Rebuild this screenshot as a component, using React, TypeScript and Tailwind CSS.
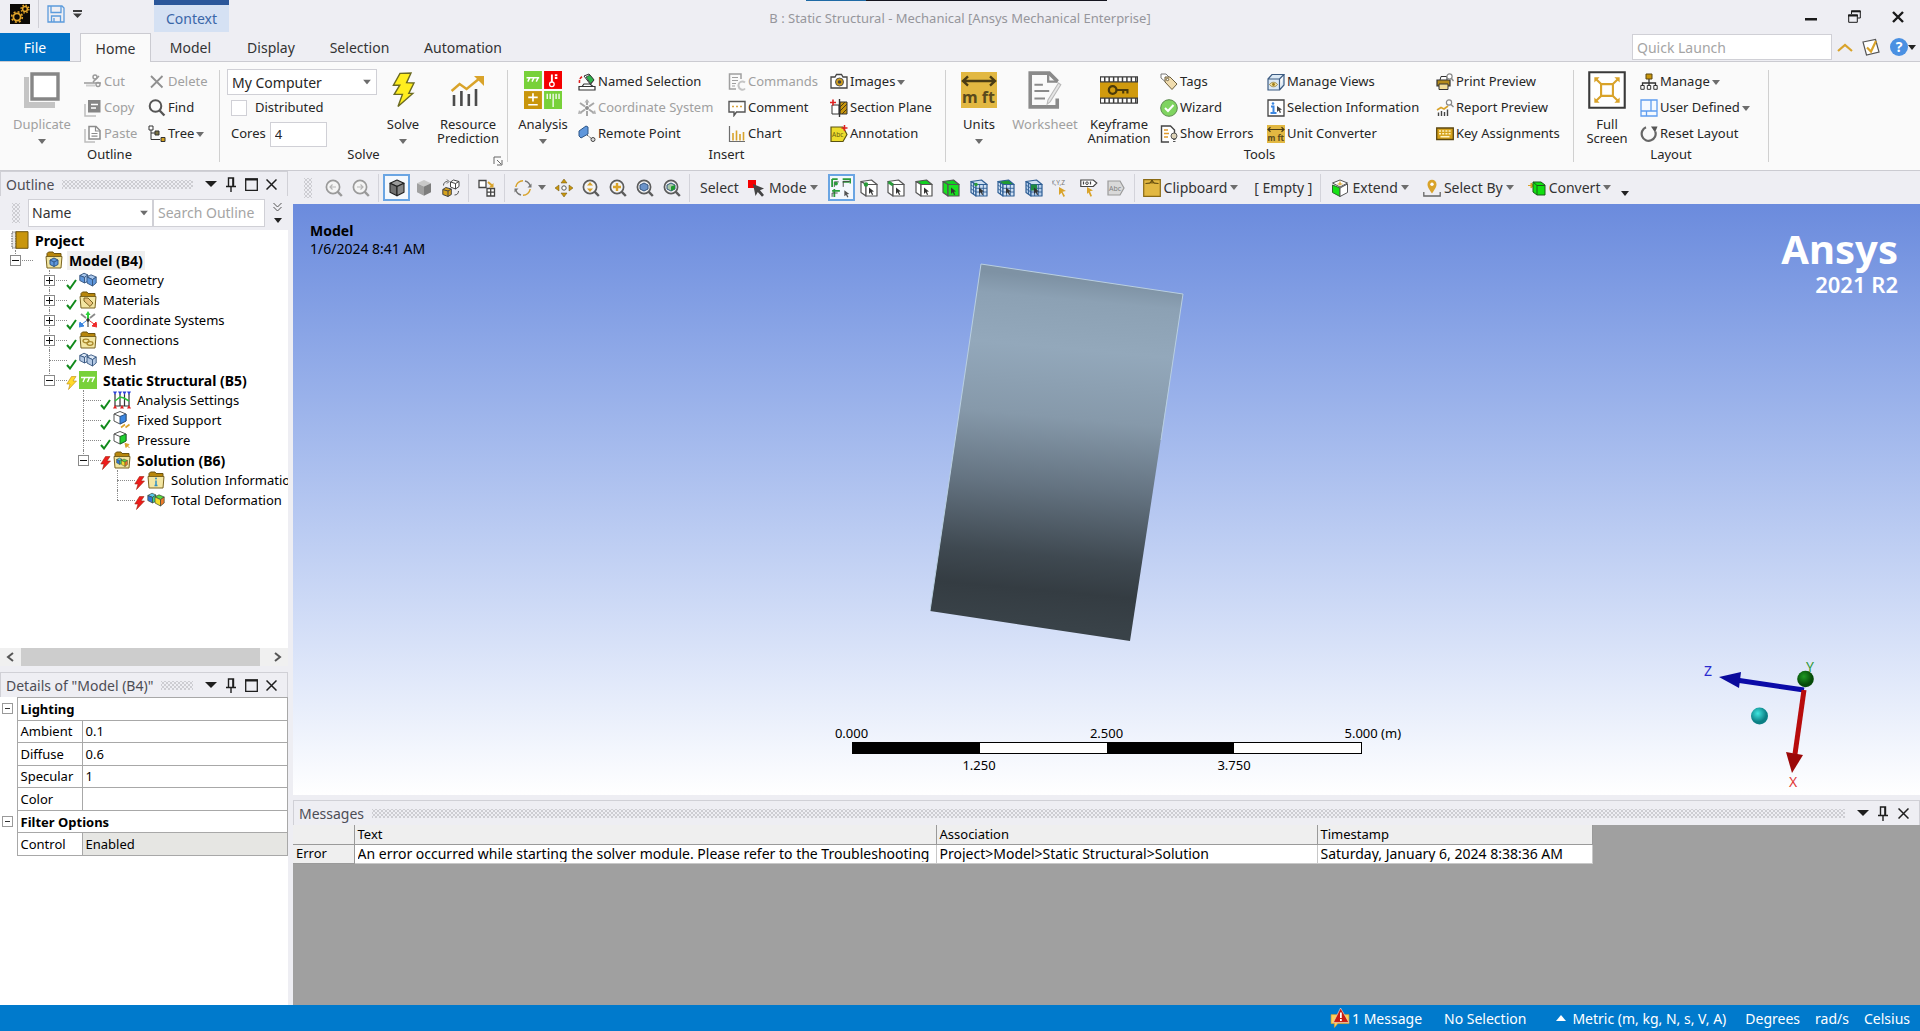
import type { ReactNode } from 'react';

type IconProps = { size?: number; children?: ReactNode };

const Icon = ({ size = 18, children }: IconProps) => (
    <svg width={size} height={size} viewBox="0 0 18 18" fill="none" className="shrink-0" aria-hidden="true">
        {children}
    </svg>
);

const Caret = ({ className = 'text-[#6d6d6d]' }: { className?: string }) => (
    <svg width="8" height="5" viewBox="0 0 8 5" className={`shrink-0 ${className}`} aria-hidden="true">
        <path d="M0 0h8L4 5z" fill="currentColor" />
    </svg>
);

/* ---------- shared icon parts ---------- */

const Magnifier = ({ stroke, children }: { stroke: string; children?: ReactNode }) => (
    <Icon>
        <circle cx="8" cy="8" r="6.6" fill="#f4f4f4" stroke={stroke} strokeWidth="1.7" />
        <path d="M12.6 12.6l4.2 4.4" stroke={stroke} strokeWidth="2.4" />
        {children}
    </Icon>
);

const IsoCube = (props: { top: string; left: string; right: string; stroke?: string }) => (
    <g stroke={props.stroke ?? '#444'} strokeWidth="1.1" strokeLinejoin="round">
        <path d="M9 1l7 3.2-7 3.4-7-3.4z" fill={props.top} />
        <path d="M2 4.2l7 3.4v9.2l-7-3.6z" fill={props.left} />
        <path d="M16 4.2L9 7.6v9.2l7-3.6z" fill={props.right} />
    </g>
);

const Cursor = () => <path d="M9 8.5l5 4-2.2.3 1.4 2.8-1.2.5-1.3-2.8L9 15z" fill="#333" />;

const PickCube = (props: { top?: string; body?: string; mesh?: boolean; children?: ReactNode }) => (
    <Icon>
        <g stroke={props.mesh ? '#2f5f95' : '#555'} strokeWidth="1.2" strokeLinejoin="round">
            <path d="M1 2.5L11.5 1 17 5.5H6z" fill={props.top ?? '#fff'} />
            <path d="M1 2.5l5 3V17l-5-3.6z" fill={props.body ?? '#fff'} />
            <path d="M6 5.5h11V17H6z" fill={props.body ?? '#fff'} />
            {props.mesh && <path d="M6 9.3h11M6 13h11M9.6 5.5V17M13.3 5.5V17M1 6l5 3.3M1 9.8L6 13M3.5 4v11.2" strokeWidth="0.9" />}
        </g>
        {props.children}
        <Cursor />
    </Icon>
);

const Folder = ({ children }: { children?: ReactNode }) => (
    <Icon>
        <path d="M2 6V2.5L3.5 1H8l1 1.5h7V6z" fill="#b8860b" stroke="#6d5410" />
        <path d="M1 5.5h16L16 17H2z" fill="#f3e6a2" stroke="#7a6420" />
        {children}
    </Icon>
);

const Bricks = ({ fill, light }: { fill: string; light: string }) => (
    <Icon>
        <g stroke="#34557f" strokeWidth="0.9" strokeLinejoin="round">
            <path d="M.8 4.5L5 2.200l4 1.800-3.500 2.400z" fill={light} />
            <path d="M.8 4.5l4.700 1.900v5.600L.8 9.500z" fill={fill} />
            <path d="M5.500 6.400L9 4v6l-3.500 2z" fill={light} />
            <path d="M8 6l4-2.200L17.200 6l-3.700 2.600z" fill={light} />
            <path d="M8 6l5.500 2.600v6.400L8 12z" fill={fill} />
            <path d="M13.500 8.600L17.200 6v6l-3.700 3z" fill={fill} />
        </g>
    </Icon>
);

const Units = ({ size }: { size?: number }) => (
    <Icon size={size}>
        <path d="M0 0h18v18H0z" fill="#e2b842" />
        <path d="M1 4.500h16M3.500 2.200L1 4.500l2.500 2.300M14.500 2.200L17 4.500l-2.500 2.300" stroke="#4a3c14" strokeWidth="1.200" />
        <text x="0.5" y="15.500" fontSize="8" fontWeight="700" fontFamily="Noto Sans, sans-serif" fill="#5a4a1c">
            m ft
        </text>
    </Icon>
);

/* ---------- ribbon icons ---------- */

const CutIcon = () => (
    <Icon>
        <path d="M0 10h17M9 9l6-6" stroke="#9a9a9a" strokeWidth="1.6" />
        <circle cx="11" cy="4" r="2" stroke="#9a9a9a" strokeWidth="1.4" />
        <circle cx="14" cy="11.500" r="2" stroke="#9a9a9a" strokeWidth="1.4" />
        <path d="M2 12.500h9" stroke="#cfcfcf" strokeWidth="2" />
    </Icon>
);
const CopyIcon = () => (
    <Icon>
        <path d="M1 5v12h11" stroke="#bdbdbd" strokeWidth="1.5" />
        <path d="M4 1h12.500v12.500H4z" fill="#858585" />
        <path d="M7 5.500h7M7 9h5" stroke="#fff" strokeWidth="1.6" />
    </Icon>
);
const PasteIcon = () => (
    <Icon>
        <path d="M1 4v13h10" stroke="#bdbdbd" strokeWidth="1.5" />
        <path d="M5 1.500h7l4 4v8.500H5z" fill="#fff" stroke="#8c8c8c" strokeWidth="1.5" />
        <path d="M7.500 8.500h6M7.500 11.200h6M11.500 1.500V6H16" stroke="#8c8c8c" strokeWidth="1.2" />
    </Icon>
);
const DeleteIcon = () => (
    <Icon>
        <path d="M3 3l11.500 11.500M14.500 3L3 14.500" stroke="#909090" strokeWidth="1.8" />
    </Icon>
);
const FindIcon = () => (
    <Icon>
        <circle cx="7.500" cy="7" r="5.800" stroke="#555" strokeWidth="2" />
        <path d="M11.600 11.500l4.800 5" stroke="#555" strokeWidth="2.4" />
    </Icon>
);
const TreeIcon = () => (
    <Icon>
        <path d="M3 5v9.500h9M3 8h6M8 8v-2" stroke="#333" />
        <path d="M1 1h4v4H1z" fill="#fff" stroke="#333" />
        <path d="M7 6h4v4H7z" fill="#7d7444" stroke="#333" />
        <path d="M13 12.500h4v4h-4z" fill="#d6a21c" stroke="#333" />
    </Icon>
);
const DuplicateIcon = () => (
    <Icon size={36}>
        <path d="M0 2.500h2.500v12.500H15.500V18H0z" fill="#c4c4c4" />
        <path d="M4 1h13v12.500H4z" fill="#fff" stroke="#868686" strokeWidth="1.7" />
    </Icon>
);
const BoltIcon = () => (
    <Icon size={36}>
        <path d="M7.500.7L13 .5l-2.200 4.800 3.700.2-2.600 5.200h2L6.500 17.300l2.200-6.100H4.600l2.800-4.600H4.200z" fill="#ffee1f" stroke="#6b6a20" strokeWidth="0.7" />
    </Icon>
);
const PredictionIcon = () => (
    <Icon size={36}>
        <path d="M2 17V11.500M5.700 17V9.500M9.400 17v-6M13 17V8.500" stroke="#4b4b4b" strokeWidth="1.3" />
        <path d="M.8 9.500l4-3.500 3.500 2.500L15 3" stroke="#d9a32a" strokeWidth="1.2" />
        <path d="M12 2h5v5z" fill="#d9a32a" />
    </Icon>
);
const AnalysisIcon = () => (
    <Icon size={38}>
        <path d="M0 0h8.500v8.500H0zM9.500 9.500H18V18H9.500z" fill="#78d13a" />
        <path d="M9.500 0H18v8.500H9.500z" fill="#f40000" />
        <path d="M0 9.500h8.500V18H0z" fill="#c9960c" />
        <path d="M1.200 3.200h6M2.700 3.300l-.9 1.700M4.700 3.300l-.9 1.700M6.700 3.300l-.9 1.700" stroke="#fff" strokeWidth="0.7" />
        <path d="M13.200 1.600v4M14.600 2h1.200M14.600 3.300h1.200" stroke="#fff" strokeWidth="0.9" />
        <circle cx="13.200" cy="6.300" r="1.100" stroke="#fff" strokeWidth="0.6" />
        <path d="M2 12.500h4.500M4.250 10.500v4M2 16h4.500" stroke="#fff" strokeWidth="0.8" />
        <path d="M11 10.800v2.500M12.400 10.800v2.500M15.200 10.800v2.500M16.600 10.800v2.500M13.800 10.800V17" stroke="#fff" strokeWidth="0.6" />
    </Icon>
);
const NamedSelectionIcon = () => (
    <Icon>
        <path d="M1.500 10C1 6 3 4 5 3.500" stroke="#e02020" strokeWidth="1.6" strokeDasharray="3 1" />
        <path d="M6 3l5-2 5 6-3.500 4.500z" fill="#fff" stroke="#333" />
        <path d="M8 4l4-2 4 5-3.500 3.500z" fill="#2fb44b" stroke="#333" strokeWidth="0.8" />
        <path d="M1 13.500h16V17H1zM4 13.500l2-2.500h6l3 2.500" fill="#fff" stroke="#333" strokeWidth="1.2" />
    </Icon>
);
const CoordinateIcon = () => (
    <Icon>
        <path d="M9 1v5M9 12v5M2 4l5 3.500M16 4l-5 3.500M2 14l5-3.500M16 14l-5-3.500" stroke="#a6a6a6" strokeWidth="2" />
        <path d="M6.500 3.500L9 0l2.500 3.500zM0 15l1-4 3 3.500zM18 15l-1-4-3 3.500z" fill="#b3b3b3" />
        <circle cx="9" cy="9" r="2" fill="#8d8d8d" />
    </Icon>
);
const RemotePointIcon = () => (
    <Icon>
        <path d="M1 6l7-5 2 1v7L3 13l-2-2z" fill="#5f97dc" stroke="#2d5688" />
        <path d="M9 10l5 4" stroke="#555" strokeDasharray="2 1" />
        <circle cx="15" cy="14.500" r="2" fill="#ddd" stroke="#444" />
    </Icon>
);
const CommandsIcon = () => (
    <Icon>
        <path d="M13 6V1H1.500v15H8" stroke="#a0a0a0" strokeWidth="1.5" />
        <path d="M4 4.500h6M4 7.500h6M4 10.500h4M4 13h3" stroke="#a0a0a0" strokeWidth="1.2" />
        <path d="M17 9.500c-3-2.500-7 0-6.500 3.500S15 18 17 15.500" stroke="#c4c4c4" strokeWidth="2" />
    </Icon>
);
const CommentIcon = () => (
    <Icon>
        <path d="M1 2.500h16v10.500H8.500L6 16.500V13H1z" fill="#fff" stroke="#555" strokeWidth="1.4" />
        <path d="M4 7.500h10" stroke="#d9a441" strokeWidth="1.4" strokeDasharray="2 2" />
    </Icon>
);
const ChartIcon = () => (
    <Icon>
        <path d="M1.500 1v15.500H17" stroke="#6d6d6d" strokeWidth="1.2" />
        <path d="M5 15.500V8M8.500 15.500v-10M12 15.500V9M15.500 15.500V7" stroke="#d9a32a" strokeWidth="1.6" />
    </Icon>
);
const ImagesIcon = () => (
    <Icon>
        <path d="M1 4h4l1.500-2.500h5L13 4h4v11H1z" fill="#fff" stroke="#444" strokeWidth="1.3" />
        <circle cx="9.500" cy="9" r="4" fill="#d4a11c" stroke="#555" />
        <circle cx="9.500" cy="9" r="1.800" fill="#444" />
    </Icon>
);
const SectionPlaneIcon = () => (
    <Icon>
        <path d="M2 6h7v9H2z" fill="#fff" stroke="#333" />
        <path d="M10 3h7v12h-7z" fill="#c9960c" stroke="#333" />
        <path d="M10 8l5-5M10 12l7-7M12 15l5-5" stroke="#4a3c14" />
        <path d="M9.500 0v18" stroke="#333" strokeWidth="1.4" />
        <path d="M0 3.500h6M3 .5v6" stroke="#e02020" strokeWidth="1.6" />
    </Icon>
);
const AnnotationIcon = () => (
    <Icon>
        <path d="M1 2h12l4 7.500-4 7H1z" fill="#eddc2c" stroke="#5b5310" strokeWidth="1.2" />
        <text x="2" y="12" fontSize="6.500" fontFamily="Noto Sans, sans-serif" fill="#6b6210">
            Abc
        </text>
        <path d="M11.500 3h6M14.500 0v6" stroke="#e02020" strokeWidth="1.5" />
    </Icon>
);
const WorksheetIcon = () => (
    <Icon size={38}>
        <path d="M14.800 13v4H2V1h9l4 4" stroke="#8a8a8a" strokeWidth="1.7" />
        <path d="M10.500 1v4H15" stroke="#8a8a8a" strokeWidth="1.1" />
        <path d="M4 6.500h4M4 9.500h7M4 13h5" stroke="#8a8a8a" strokeWidth="1" />
        <path d="M16.500 6.500l-5 8-1.500 1.200.4-2 5-8z" fill="#e6e6e6" stroke="#b9b9b9" strokeWidth="0.5" />
    </Icon>
);
const KeyframeIcon = () => (
    <Icon size={38}>
        <path d="M0 2.500h18v13H0z" fill="#3b3b3b" />
        <path d="M.5 4h17M.5 14h17" stroke="#fff" strokeWidth="1.8" strokeDasharray="1.400 .7" />
        <path d="M0 5.400h18v7.200H0z" fill="#d09a0e" />
        <circle cx="6" cy="9" r="1.800" stroke="#4a3a0a" strokeWidth="1.1" />
        <path d="M7.800 9H13.500M11 9v1.600M13 9v1.600" stroke="#4a3a0a" strokeWidth="1" />
    </Icon>
);
const TagsIcon = () => (
    <Icon>
        <path d="M1 1l5 0 6 6-4 4-7-6z" fill="#fff" stroke="#777" />
        <path d="M5 4l5 0 7 7-5 5.500-7-7.500z" fill="#f0dcae" stroke="#6b5d3c" />
        <circle cx="7.500" cy="6.500" r="1.200" fill="#fff" stroke="#6b5d3c" />
    </Icon>
);
const WizardIcon = () => (
    <Icon>
        <circle cx="9" cy="9" r="8.300" fill="#7fd460" stroke="#5a8a4a" />
        <path d="M5 9l3 3 5.500-6" stroke="#fff" strokeWidth="2" />
    </Icon>
);
const ShowErrorsIcon = () => (
    <Icon>
        <path d="M9 17H1.500V1h9l4 4v3" fill="#fff" stroke="#444" strokeWidth="1.4" />
        <path d="M4 5h4M4 8.500h5M4 12h4" stroke="#e09a2c" strokeWidth="1.4" />
        <circle cx="14" cy="11" r="3" fill="#ddd3b8" stroke="#555" />
        <path d="M13 14.500h2.500M13 16.500h2.500" stroke="#555" />
    </Icon>
);
const ManageViewsIcon = () => (
    <Icon>
        <path d="M1 6h11.500v11H1zM1 6l4-4.500h12L12.500 6M17 1.500V12l-4.500 5" fill="#dbe9f5" stroke="#3d5c82" strokeWidth="1.2" />
        <path d="M2.500 11.500c2-3 6-3 8 0-2 3-6 3-8 0z" fill="#f2e2a0" stroke="#8d7730" strokeWidth="0.8" />
        <circle cx="6.500" cy="11.500" r="1.400" fill="#9d7b14" />
    </Icon>
);
const SelectionInfoIcon = () => (
    <Icon>
        <path d="M1 1h16v16H1z" fill="#fff" stroke="#444" strokeWidth="1.3" />
        <path d="M4 7.500h2.500V14M3.500 14h6" stroke="#3b86e0" strokeWidth="2" />
        <circle cx="6" cy="4.500" r="1.300" fill="#3b86e0" />
        <path d="M10 7l5 3.500-2 .5 1 2.500-1.200.5-1-2.500L10 13z" fill="#444" />
    </Icon>
);
const PrintIcon = () => (
    <Icon>
        <path d="M4 7l1-3.500h6V7" fill="#fff" stroke="#333" />
        <path d="M1 7h13v6H1z" fill="#b38a1a" stroke="#333" strokeWidth="1.2" />
        <path d="M3 11h9v5.500H3z" fill="#f1dc96" stroke="#333" />
        <circle cx="13.500" cy="3.500" r="2.600" fill="#fff" stroke="#888" strokeWidth="1.2" />
        <path d="M15.500 5.500L17.500 8" stroke="#888" strokeWidth="1.4" />
    </Icon>
);
const ReportIcon = () => (
    <Icon>
        <path d="M1 11l4-2.500L8 10l4-3" stroke="#d9a32a" strokeWidth="1.6" />
        <path d="M2.500 17v-3.500M5.500 17v-5M8.500 17v-4M11.500 17v-6.500" stroke="#444" strokeWidth="1.4" />
        <circle cx="13" cy="3.500" r="2.600" fill="#fff" stroke="#888" strokeWidth="1.2" />
        <path d="M15 5.500L17.500 8" stroke="#888" strokeWidth="1.4" />
    </Icon>
);
const KeyboardIcon = () => (
    <Icon>
        <path d="M.7 3h16.600v11.500H.7z" fill="#d6a21c" stroke="#5b4710" strokeWidth="1.3" />
        <path d="M3 6h12M3 8.800h12" stroke="#fff3c4" strokeWidth="1.6" strokeDasharray="2 1.200" />
        <path d="M4.500 11.700h9" stroke="#fff3c4" strokeWidth="1.5" />
    </Icon>
);
const FullScreenIcon = () => (
    <Icon size={38}>
        <path d="M.6.6h16.800v16.800H.6z" fill="#fff" stroke="#3a3a3a" strokeWidth="1" />
        <path d="M6.200 6.200h5.600v5.600H6.200zM6.200 6.200L4 4M11.800 6.200L14 4M6.200 11.800L4 14M11.800 11.800L14 14" stroke="#d9a32a" strokeWidth="1" />
        <path d="M3 3h2.500L3 5.500zM15 3v2.500L12.500 3zM3 15v-2.500L5.500 15zM15 15h-2.500l2.500-2.500z" fill="#d9a32a" />
    </Icon>
);
const ManageIcon = () => (
    <Icon>
        <path d="M9 6v4M2.500 13v-3h13v3M9 10v3" stroke="#333" strokeWidth="1.3" />
        <path d="M6 1h6v5H6z" fill="#c9960c" stroke="#5b4710" />
        <path d="M.8 12.500h3.400v3.800H.8zM7.300 12.500h3.400v3.800H7.300zM13.800 12.500h3.400v3.800h-3.400z" fill="#fff" stroke="#333" />
    </Icon>
);
const UserDefinedIcon = () => (
    <Icon>
        <path d="M1 1h16v16H1zM1 12h16M11 1v11M6.500 12v5" fill="#f4f9ff" stroke="#5f9df0" strokeWidth="1.3" />
    </Icon>
);
const ResetIcon = () => (
    <Icon>
        <path d="M6 2.300A7 7 0 1 0 15.300 6.500" stroke="#666" strokeWidth="2.2" />
        <path d="M11 1.500h6.500L15 7.500z" fill="#555" />
    </Icon>
);

/* ---------- graphics toolbar icons ---------- */

const ViewSwapIcon = () => (
    <Icon>
        <g stroke="#444" strokeLinejoin="round">
            <path d="M8.500 3l3-2 5.500 1.500v5L13.500 10l-5-2z" fill="#fff" />
            <path d="M8.500 3l5 1.500L17 2.500M13.500 4.500V10" />
            <path d="M.8 10.500l3-2 5.500 1.500v5.500L6 17.500l-5.200-2z" fill="#d6a21c" />
            <path d="M.8 10.500L6 12l3.300-2M6 12v5.500" />
        </g>
        <path d="M1.500 6.500C1.500 4 3 2.500 5.500 2.500M5 .5l2 2-2 2M16.500 12c0 2.500-1.500 4-4 4" stroke="#555" />
    </Icon>
);
const GridViewIcon = () => (
    <Icon>
        <path d="M1 1.500h7v7H1zM9 9.500h7.500v7.500H9zM12.700 9.500V17M9 13.200h7.500" fill="#fff" stroke="#444" strokeWidth="1.3" />
        <path d="M10 3l4 3.500" stroke="#d9a32a" strokeWidth="2" />
        <path d="M15.500 4v4.500H11z" fill="#d9a32a" />
    </Icon>
);
const RotateIcon = () => (
    <Icon>
        <path d="M1.800 8A7.200 7.200 0 0 1 9 1.800M9 16.200a7.200 7.200 0 0 0 7.200-6.200" stroke="#d9a32a" strokeWidth="1.5" />
        <path d="M11 2a7.200 7.200 0 0 1 5.200 5M7 16a7.200 7.200 0 0 1-5.200-5" stroke="#777" strokeWidth="1.5" />
        <path d="M17.500 4.500v4h-4zM.5 13.500v-4h4z" fill="#777" />
    </Icon>
);
const PanIcon = () => (
    <Icon>
        <path d="M9 0l3 4H6zM9 18l3-4H6zM0 9l4-3v6zM18 9l-4-3v6z" fill="#c9960c" stroke="#6b5210" strokeWidth="0.5" />
        <circle cx="9" cy="9" r="2.200" fill="#fff" stroke="#555" />
    </Icon>
);
const ModeIcon = () => (
    <Icon>
        <path d="M0 1h8v8H0z" fill="#f40000" />
        <path d="M5 5l11 4.500-4 1.800 4 4.700-2 1.700-4.200-4.700L7.500 17z" fill="#444" />
    </Icon>
);
const SmartPickIcon = () => (
    <Icon size={20}>
        <path d="M1 1v7M1 1h5M10.500 3.500h6M10.500 1h7v4M1 11.500h7M3 10v7" stroke="#2a9c3a" strokeWidth="1.6" />
        <path d="M3 8V3.500h4M11 8V3h6M1 17v-3.500h5" stroke="#444" strokeWidth="0.8" />
        <circle cx="4.500" cy="5" r="1.700" fill="#2a9c3a" />
        <path d="M12 11l4.500 3.500-2 .2 1.200 2.500-1 .4-1.200-2.400L12 16.500z" fill="#555" />
    </Icon>
);
const XyzIcon = () => (
    <Icon>
        <text x="-1" y="5.500" fontSize="6.500" fontFamily="Noto Sans, sans-serif" fill="#777">
            X,Y,Z
        </text>
        <path d="M7 8l7 4-3.500.7L13 17l-1.500 1-2-4.300L7 16z" fill="#d9a32a" />
    </Icon>
);
const ProbeIcon = () => (
    <Icon>
        <path d="M.8 1h12.500l3.500 3-3.500 3.500H.8z" fill="#fff" stroke="#444" strokeWidth="1.2" />
        <path d="M3.500 2.500v3M10.500 2.500v3" stroke="#444" strokeWidth="1.2" />
        <circle cx="7" cy="4.200" r="1.300" stroke="#444" />
        <path d="M7 8l6 3.500-3 .8L12 17l-1.500.8-2-4.300L7 15z" fill="#d9a32a" />
    </Icon>
);
const LabelIcon = () => (
    <Icon>
        <path d="M1 2h12l4 7-4 7H1z" fill="#d9d9d9" stroke="#9a9a9a" strokeWidth="1.2" />
        <text x="2" y="11.500" fontSize="7" fontFamily="Noto Sans, sans-serif" fill="#808080">
            Abc
        </text>
    </Icon>
);
const ClipboardIcon = () => (
    <Icon>
        <path d="M.7.7h16.600v16.600H.7z" fill="#e2b842" stroke="#8a6a14" strokeWidth="1.2" />
        <path d="M2.500 4.500L7 4l2-3 2 3 4.500.5" fill="#8a6a14" stroke="#5b4710" />
    </Icon>
);
const ExtendIcon = () => (
    <Icon>
        <path d="M9 1l7.500 3L9 8 1.500 4z" fill="#fff" stroke="#555" />
        <path d="M1.500 6L9 9v8.500L1.500 13.500z" fill="#15e215" stroke="#2c6b2c" />
        <path d="M16.500 5L9 9v8.500l7.500-4z" fill="#fff" stroke="#555" />
        <path d="M9 2.500v4M6.500 5h5" stroke="#d9a32a" strokeWidth="1.2" />
    </Icon>
);
const SelectByIcon = () => (
    <Icon>
        <path d="M9 14.500C6 10 4.500 8 4.500 5.300a4.500 4.500 0 0 1 9 0C13.500 8 12 10 9 14.500z" fill="#d9a32a" />
        <circle cx="9" cy="5.200" r="1.700" fill="#fff" />
        <path d="M.8 13v4h16.400v-4" stroke="#666" strokeWidth="1.3" />
    </Icon>
);
const ConvertIcon = () => (
    <Icon>
        <path d="M0 6.500h4M3 4l3 2.500L3 9z" stroke="#d9a32a" fill="#d9a32a" />
        <path d="M5 3h8l4 3v10H9l-4-3z" fill="#10e010" stroke="#1d5a1d" />
        <path d="M5 3l4 3.500h8M9 6.500V16" stroke="#1d5a1d" />
    </Icon>
);

/* ---------- panel chrome ---------- */

const Dots = () => (
    <div className="mx-2 h-[9px] min-w-0 flex-1 bg-[radial-gradient(#cdcdd2_1px,transparent_1px),radial-gradient(#cdcdd2_1px,transparent_1px)] bg-[size:4px_4px] bg-[position:0_0,2px_2px]" />
);

const Grip = () => (
    <div className="h-5 w-2 shrink-0 bg-[radial-gradient(#cdcdd2_1px,transparent_1px),radial-gradient(#cdcdd2_1px,transparent_1px)] bg-[size:4px_4px] bg-[position:0_0,2px_2px]" />
);

const PanelHeader = (props: { title: string; maximize?: boolean }) => (
    <div className="flex h-[25px] shrink-0 items-center border border-b-0 border-[#d0d0d6] bg-[#eeeef3] pr-[6px] pl-[5px] text-[14px] text-[#4d4d55]">
        <h2 className="whitespace-nowrap">{props.title}</h2>
        <Dots />
        <div className="flex items-center text-[#1e1e1e]">
            <button aria-label="Window options" className="flex size-5 items-center justify-center">
                <svg width="12" height="6" viewBox="0 0 12 6">
                    <path d="M0 0h12L6 6z" fill="currentColor" />
                </svg>
            </button>
            <button aria-label="Auto hide" className="flex size-5 items-center justify-center">
                <svg width="10" height="15" viewBox="0 0 10 15" fill="none" stroke="currentColor">
                    <path d="M2.500 9V1h5v8M0 9.500h10M5 9.500V15" strokeWidth="1.4" />
                    <path d="M7 1v8" strokeWidth="1.6" />
                </svg>
            </button>
            {props.maximize && (
                <button aria-label="Maximize" className="flex size-5 items-center justify-center">
                    <svg width="13" height="13" viewBox="0 0 13 13" fill="none" stroke="currentColor">
                        <path d="M.7 1h11.600v11.300H.7z" strokeWidth="1.3" />
                        <path d="M0 1.500h13" strokeWidth="2" />
                    </svg>
                </button>
            )}
            <button aria-label="Close" className="flex size-5 items-center justify-center">
                <svg width="11" height="11" viewBox="0 0 11 11" fill="none" stroke="currentColor">
                    <path d="M.5.5l10 10M10.500.5l-10 10" strokeWidth="1.5" />
                </svg>
            </button>
        </div>
    </div>
);

/* ---------- title bar and tabs ---------- */

const TitleBar = () => (
    <header className="relative flex h-[33px] shrink-0 items-start bg-[#eeeef3]">
        <div className="flex h-[28px] items-center pl-[10px]">
            <svg width="20" height="20" viewBox="0 0 20 20" fill="none" aria-hidden="true">
                <path d="M0 0h20v20H0z" fill="#0c0a06" />
                <circle cx="7" cy="13" r="3.600" stroke="#e2a52a" strokeWidth="1.8" />
                <circle cx="7" cy="13" r="5.300" stroke="#e2a52a" strokeWidth="1.6" strokeDasharray="2 2.160" />
                <circle cx="15" cy="5" r="2.400" stroke="#e2a52a" strokeWidth="1.5" />
                <circle cx="15" cy="5" r="3.900" stroke="#e2a52a" strokeWidth="1.4" strokeDasharray="1.500 1.560" />
            </svg>
            <div className="mx-2 h-7 w-px bg-[#cfcfd6]" />
            <button aria-label="Save">
                <svg width="18" height="18" viewBox="0 0 18 18" fill="none" stroke="#5b9bdc" strokeWidth="1.3">
                    <path d="M1 1h14l2 2v14H1zM4 1v6.500h10V1M4.500 17v-6h9v6M7 13v4" />
                </svg>
            </button>
            <button aria-label="Customize quick access" className="ml-2">
                <svg width="9" height="8" viewBox="0 0 9 8" fill="#3c3c3c">
                    <path d="M0 0h9v2H0zM0 3.500h9L4.500 8z" />
                </svg>
            </button>
        </div>
        <div className="ml-[72px] flex h-8 w-[75px] items-center justify-center border-t-[5px] border-[#2b579a] bg-[#d5e1f3] text-[14px] text-[#3a66a8]">
            Context
        </div>
        <h1 className="absolute top-[8px] left-1/2 -translate-x-1/2 text-[13px] leading-5 whitespace-nowrap text-[#96969c]">
            B : Static Structural - Mechanical [Ansys Mechanical Enterprise]
        </h1>
        <div className="absolute top-0 left-[42%] flex h-px w-[301px]">
            <div className="w-[60px] bg-[#1f6aa5]" />
            <div className="flex-1 bg-[#15151f]" />
        </div>
        <div className="ml-auto flex h-[33px] items-center gap-[31px] pr-[16px] text-[#1a1a1a]">
            <button aria-label="Minimize">
                <svg width="12" height="12" viewBox="0 0 12 12">
                    <path d="M0 7h12v2.500H0z" fill="currentColor" />
                </svg>
            </button>
            <button aria-label="Restore">
                <svg width="13" height="13" viewBox="0 0 13 13" fill="none" stroke="currentColor">
                    <path d="M3.500 4V.8h8.800V8H9.500" />
                    <path d="M3 1.500h9.500" strokeWidth="1.6" />
                    <path d="M.7 5h8.600v7.300H.7z" />
                    <path d="M0 5.500h10" strokeWidth="2" />
                </svg>
            </button>
            <button aria-label="Close window">
                <svg width="12" height="12" viewBox="0 0 12 12" fill="none" stroke="currentColor">
                    <path d="M1 1l10 10M11 1L1 11" strokeWidth="2.4" />
                </svg>
            </button>
        </div>
    </header>
);

const TabBar = () => (
    <nav className="flex h-[29px] shrink-0 items-stretch border-b border-[#cbcbd1] bg-[#eeeef3] text-[14px] text-[#333]">
        <button className="mr-[10px] w-[70px] bg-[#0072c6] text-white">File</button>
        <button className="-mb-px w-[71px] border border-b-0 border-[#cbcbd1] bg-[#fafafa]">Home</button>
        <button className="w-[79px] pt-px">Model</button>
        <button className="w-[82px] pt-px">Display</button>
        <button className="w-[95px] pt-px">Selection</button>
        <button className="w-[112px] pt-px">Automation</button>
        <div className="ml-auto flex items-center pr-[4px]">
            <input
                aria-label="Quick Launch"
                placeholder="Quick Launch"
                className="h-[26px] w-[200px] border border-[#d0d0d6] bg-white px-1 text-[14px] placeholder:text-[#a5a5a5]"
            />
            <button aria-label="Collapse ribbon" className="ml-[5px]">
                <svg width="16" height="9" viewBox="0 0 16 9" fill="none" stroke="#d9a32a" strokeWidth="2.2">
                    <path d="M1 8l7-6 7 6" />
                </svg>
            </button>
            <button aria-label="Options" className="ml-[9px]">
                <svg width="18" height="18" viewBox="0 0 18 18" fill="none">
                    <path d="M1 4l12.500-2.500L17 14 4.500 17z" fill="#fff" stroke="#555" strokeWidth="1.2" />
                    <path d="M5 9.500l4 4L14 3" stroke="#d9a32a" strokeWidth="2.2" />
                </svg>
            </button>
            <button aria-label="Help" className="ml-[10px] flex items-center">
                <span className="flex size-[18px] items-center justify-center rounded-full bg-[#4a90e2] text-[14px] leading-none font-bold text-white">
                    ?
                </span>
                <Caret className="text-[#222]" />
            </button>
        </div>
    </nav>
);

/* ---------- ribbon ---------- */

const Item = (props: { icon: ReactNode; label: string; disabled?: boolean; caret?: boolean }) => (
    <button
        disabled={props.disabled}
        className="flex h-[26px] items-center gap-[2px] text-left whitespace-nowrap text-[#262626] disabled:text-[#a0a0a0]"
    >
        {props.icon}
        <span>{props.label}</span>
        {props.caret && <Caret />}
    </button>
);

const BigItem = (props: { icon: ReactNode; label: string; width: string; disabled?: boolean; caret?: boolean }) => (
    <button
        disabled={props.disabled}
        className={`flex shrink-0 flex-col items-center pt-[2px] text-[#262626] disabled:text-[#a0a0a0] ${props.width}`}
    >
        <div className="flex h-[38px] items-center">{props.icon}</div>
        <span className="mt-[8px] text-center leading-[14px] whitespace-pre">{props.label}</span>
        {props.caret && (
            <span className="mt-[8px]">
                <Caret />
            </span>
        )}
    </button>
);

const Column = (props: { width: string; children: ReactNode }) => (
    <div className={`flex shrink-0 flex-col items-start ${props.width}`}>{props.children}</div>
);

const Group = (props: { title: string; launcher?: boolean; children: ReactNode }) => (
    <section className="flex shrink-0">
        <div className="relative">
            <div className="flex h-[78px]">{props.children}</div>
            <h3 className="text-center leading-[14px]">{props.title}</h3>
            {props.launcher && (
                <button aria-label="Solve settings" className="absolute right-[4px] bottom-[4px]">
                    <svg width="10" height="10" viewBox="0 0 10 10" fill="none" stroke="#666">
                        <path d="M1 8V1h7M4 4l4 4M9 4v5H4" />
                    </svg>
                </button>
            )}
        </div>
        <div className="mt-px h-[92px] w-px bg-[#d0d0d0]" />
    </section>
);

const Ribbon = () => (
    <div className="flex h-[109px] shrink-0 border-b border-[#cbcbd1] bg-[#fafafa] pt-[7px] text-[13px] text-[#262626]">
        <Group title="Outline">
            <BigItem width="w-[84px]" icon={<DuplicateIcon />} label="Duplicate" disabled caret />
            <Column width="w-[64px]">
                <Item icon={<CutIcon />} label="Cut" disabled />
                <Item icon={<CopyIcon />} label="Copy" disabled />
                <Item icon={<PasteIcon />} label="Paste" disabled />
            </Column>
            <Column width="w-[71px]">
                <Item icon={<DeleteIcon />} label="Delete" disabled />
                <Item icon={<FindIcon />} label="Find" />
                <Item icon={<TreeIcon />} label="Tree" caret />
            </Column>
        </Group>
        <Group title="Solve" launcher>
            <Column width="ml-[7px] w-[150px]">
                <div className="relative w-full">
                    <select
                        aria-label="Solve process"
                        className="h-[26px] w-full appearance-none border border-[#d0d0d6] bg-white px-1 text-[14px] text-[#262626]"
                    >
                        <option>My Computer</option>
                    </select>
                    <span className="pointer-events-none absolute top-1/2 right-[6px] -translate-y-1/2">
                        <Caret />
                    </span>
                </div>
                <label className="flex h-[26px] items-center gap-2 pl-1">
                    <input type="checkbox" className="size-4 appearance-none border border-[#d0d0d6] bg-white" />
                    Distributed
                </label>
                <label className="flex h-[26px] items-center gap-1 pl-1">
                    Cores
                    <input defaultValue="4" className="h-[25px] w-[57px] border border-[#d0d0d6] bg-white px-1" />
                </label>
            </Column>
            <BigItem width="w-[52px]" icon={<BoltIcon />} label="Solve" caret />
            <BigItem width="w-[78px]" icon={<PredictionIcon />} label={'Resource\nPrediction'} />
        </Group>
        <Group title="Insert">
            <BigItem width="w-[70px]" icon={<AnalysisIcon />} label="Analysis" caret />
            <Column width="w-[150px]">
                <Item icon={<NamedSelectionIcon />} label="Named Selection" />
                <Item icon={<CoordinateIcon />} label="Coordinate System" disabled />
                <Item icon={<RemotePointIcon />} label="Remote Point" />
            </Column>
            <Column width="w-[102px]">
                <Item icon={<CommandsIcon />} label="Commands" disabled />
                <Item icon={<CommentIcon />} label="Comment" />
                <Item icon={<ChartIcon />} label="Chart" />
            </Column>
            <Column width="w-[115px]">
                <Item icon={<ImagesIcon />} label="Images" caret />
                <Item icon={<SectionPlaneIcon />} label="Section Plane" />
                <Item icon={<AnnotationIcon />} label="Annotation" />
            </Column>
        </Group>
        <Group title="Tools">
            <BigItem width="w-[66px]" icon={<Units size={36} />} label="Units" caret />
            <BigItem width="w-[66px]" icon={<WorksheetIcon />} label="Worksheet" disabled />
            <BigItem width="w-[82px]" icon={<KeyframeIcon />} label={'Keyframe\nAnimation'} />
            <Column width="w-[107px]">
                <Item icon={<TagsIcon />} label="Tags" />
                <Item icon={<WizardIcon />} label="Wizard" />
                <Item icon={<ShowErrorsIcon />} label="Show Errors" />
            </Column>
            <Column width="w-[169px]">
                <Item icon={<ManageViewsIcon />} label="Manage Views" />
                <Item icon={<SelectionInfoIcon />} label="Selection Information" />
                <Item icon={<Units />} label="Unit Converter" />
            </Column>
            <Column width="w-[137px]">
                <Item icon={<PrintIcon />} label="Print Preview" />
                <Item icon={<ReportIcon />} label="Report Preview" />
                <Item icon={<KeyboardIcon />} label="Key Assignments" />
            </Column>
        </Group>
        <Group title="Layout">
            <BigItem width="w-[66px]" icon={<FullScreenIcon />} label={'Full\nScreen'} />
            <Column width="w-[128px]">
                <Item icon={<ManageIcon />} label="Manage" caret />
                <Item icon={<UserDefinedIcon />} label="User Defined" caret />
                <Item icon={<ResetIcon />} label="Reset Layout" />
            </Column>
        </Group>
    </div>
);

/* ---------- outline ---------- */

type NodeStatus = 'ok' | 'stale' | 'error';
type TreeNode = {
    label: string;
    depth: number;
    icon: ReactNode;
    toggle?: '+' | '-';
    status?: NodeStatus;
    bold?: boolean;
    last?: boolean;
    selected?: boolean;
};

const RESULT_CUBES = (
    <g stroke="#3a4a3a" strokeWidth="0.7" strokeLinejoin="round">
        <path d="M.8 4.500L5 2.200l4 1.800-3.500 2.400z" fill="#58c8e8" />
        <path d="M.8 4.500l4.700 1.900v5.600L.8 9.500z" fill="#2f74d8" />
        <path d="M5.500 6.400L9 4v6l-3.500 2z" fill="#3ccf8a" />
        <path d="M8 6l4-2.200L17.200 6l-3.700 2.600z" fill="#5ad83c" />
        <path d="M8 6l5.500 2.600v6.400L8 12z" fill="#f1dc2c" />
        <path d="M13.500 8.600L17.200 6v6l-3.700 3z" fill="#ef7b2a" />
    </g>
);

const treeNodes: TreeNode[] = [
    {
        label: 'Model (B4)',
        depth: 1,
        toggle: '-',
        bold: true,
        selected: true,
        last: true,
        icon: (
            <Folder>
                <path d="M5 9l4-2 4 2v4.500l-4 2-4-2z" fill="#5f97dc" stroke="#2d5688" />
                <path d="M5 9l4 2 4-2M9 11v4.500" stroke="#2d5688" />
            </Folder>
        ),
    },
    { label: 'Geometry', depth: 2, toggle: '+', status: 'ok', icon: <Bricks fill="#5f97dc" light="#a9c8ee" /> },
    {
        label: 'Materials',
        depth: 2,
        toggle: '+',
        status: 'ok',
        icon: (
            <Folder>
                <path d="M5 7h4l5 5-3 3.500-6-5.500z" fill="#e8c37c" stroke="#7a6420" />
            </Folder>
        ),
    },
    {
        label: 'Coordinate Systems',
        depth: 2,
        toggle: '+',
        status: 'ok',
        icon: (
            <Icon>
                <path d="M9 8V3" stroke="#2bd13a" strokeWidth="2" />
                <path d="M6.500 4L9 0l2.500 4z" fill="#2bd13a" />
                <path d="M2 3l5 4M16 3l-5 4M9 10v6" stroke="#8a8a8a" strokeWidth="1.8" />
                <path d="M7 10l-4 3M0 16l1-5 4 4z" stroke="#3b86e0" fill="#3b86e0" />
                <path d="M11 10l4 3M18 16l-1-5-4 4z" stroke="#ee2a2a" fill="#ee2a2a" />
                <circle cx="9" cy="9" r="1.800" fill="#333" />
            </Icon>
        ),
    },
    {
        label: 'Connections',
        depth: 2,
        toggle: '+',
        status: 'ok',
        icon: (
            <Folder>
                <ellipse cx="7" cy="10" rx="3" ry="1.800" stroke="#a8862a" strokeWidth="1.3" />
                <ellipse cx="11" cy="12.500" rx="3" ry="1.800" stroke="#a8862a" strokeWidth="1.3" />
            </Folder>
        ),
    },
    { label: 'Mesh', depth: 2, status: 'ok', icon: <Bricks fill="#b4c9e4" light="#dce8f6" /> },
    {
        label: 'Static Structural (B5)',
        depth: 2,
        toggle: '-',
        status: 'stale',
        bold: true,
        last: true,
        icon: (
            <Icon>
                <path d="M0 0h18v18H0z" fill="#78d13a" />
                <path d="M2 6.500h14M6 6.500L4 11M10.500 6.500l-2 4.500M15 6.500L13 11" stroke="#fff" strokeWidth="1.4" />
            </Icon>
        ),
    },
    {
        label: 'Analysis Settings',
        depth: 3,
        status: 'ok',
        icon: (
            <Icon>
                <path d="M2 3v12M7 3v12M11.500 3v12M16 3v12M2 15h14" stroke="#333" strokeWidth="1.2" />
                <path d="M0 .5h4L2 4zM5 .5h4L7 4zM9.500.5h4L11.500 4zM14 .5h4L16 4z" fill="#2a3fd8" />
                <path d="M2 10l5-4 4 1 5 3" stroke="#2bc13a" strokeWidth="1.5" />
                <path d="M2 14l2 3.500H0zM9 14l2 3.500H7zM16 14l2 3.500h-4z" fill="#e02020" />
            </Icon>
        ),
    },
    {
        label: 'Fixed Support',
        depth: 3,
        status: 'ok',
        icon: (
            <Icon>
                <path d="M1 3l6-2.500L13 3v7l-6 3-6-3z" fill="#fff" stroke="#555" />
                <path d="M7 5.500L13 3v7l-6 3z" fill="#3b86e0" stroke="#2d5688" />
                <path d="M1 3l6 2.500" stroke="#555" />
                <path d="M8 16.500l4-3M12.500 16.500l4-3" stroke="#d9a32a" strokeWidth="1.6" />
            </Icon>
        ),
    },
    {
        label: 'Pressure',
        depth: 3,
        status: 'ok',
        icon: (
            <Icon>
                <path d="M1 3l6-2.500L13 3v7l-6 3-6-3z" fill="#fff" stroke="#555" />
                <path d="M7 5.500L13 3v7l-6 3z" fill="#1fd02f" stroke="#1d6b28" />
                <path d="M1 3l6 2.500" stroke="#555" />
                <path d="M16.500 17l-3-3M12 12.500l4 1-3 3z" stroke="#d9a32a" fill="#d9a32a" />
            </Icon>
        ),
    },
    {
        label: 'Solution (B6)',
        depth: 3,
        toggle: '-',
        status: 'error',
        bold: true,
        last: true,
        icon: (
            <Folder>
                <svg x="3" y="5.500" width="12" height="12" viewBox="0 0 18 18">
                    {RESULT_CUBES}
                </svg>
            </Folder>
        ),
    },
    {
        label: 'Solution Information',
        depth: 4,
        status: 'error',
        icon: (
            <Folder>
                <path d="M9 9.500v5M7.500 14.500h3" stroke="#2f8fc4" strokeWidth="1.5" />
                <circle cx="9" cy="7.500" r="1" fill="#2f8fc4" />
            </Folder>
        ),
    },
    { label: 'Total Deformation', depth: 4, status: 'error', last: true, icon: <Icon>{RESULT_CUBES}</Icon> },
];

const StatusMark = ({ status }: { status: NodeStatus }) => {
    if (status === 'ok') {
        return (
            <svg width="11" height="11" viewBox="0 0 11 11" fill="none" aria-hidden="true">
                <path d="M1 6l3 3.500L10 1" stroke="#128a1c" strokeWidth="2" />
            </svg>
        );
    }
    const fill = status === 'stale' ? '#ffd92a' : '#ee1c1c';
    const stroke = status === 'stale' ? '#b98a10' : '#9d2a10';
    return (
        <svg width="11" height="14" viewBox="0 0 11 14" aria-hidden="true">
            <path d="M5.500 .5h4.500L7 5h3.500L2.500 13.500l1.500-5.500H.8z" fill={fill} stroke={stroke} strokeWidth="0.6" />
        </svg>
    );
};

const TreeRow = ({ node }: { node: TreeNode }) => (
    <li className="flex h-5 items-center">
        {Array.from({ length: node.depth - 1 }).map((_, i) => (
            <span key={i} className="w-[34px] shrink-0" />
        ))}
        <span className="relative h-5 w-[30px] shrink-0">
            <span
                className={`absolute top-0 left-0 border-l border-dotted border-[#8a8a8a] ${node.last ? 'h-[10px]' : 'h-5'}`}
            />
            <span className="absolute top-[10px] left-0 w-[18px] border-t border-dotted border-[#8a8a8a]" />
            {node.toggle && (
                <button
                    aria-label={node.toggle === '+' ? 'Expand' : 'Collapse'}
                    className="absolute top-[5px] -left-[5px] flex size-[11px] items-center justify-center border border-[#8a8a8a] bg-white"
                >
                    <svg width="7" height="7" viewBox="0 0 7 7" stroke="#111">
                        <path d={node.toggle === '+' ? 'M0 3.500h7M3.500 0v7' : 'M0 3.500h7'} />
                    </svg>
                </button>
            )}
            {node.status && (
                <span className="absolute right-[2px] bottom-0">
                    <StatusMark status={node.status} />
                </span>
            )}
        </span>
        {node.icon}
        <span
            className={`ml-1 px-[2px] leading-[19px] whitespace-nowrap ${node.bold ? 'text-[14px] font-bold' : ''} ${node.selected ? 'bg-[#efefef]' : ''}`}
        >
            {node.label}
        </span>
    </li>
);

const OutlinePanel = () => (
    <section className="flex min-h-0 flex-1 flex-col bg-white">
        <PanelHeader title="Outline" maximize />
        <div className="flex h-[34px] shrink-0 items-center bg-[#eeeef3] pb-px pl-[12px]">
            <Grip />
            <div className="relative ml-2 w-[125px]">
                <select
                    aria-label="Filter by"
                    className="h-7 w-full appearance-none border border-[#d0d0d6] bg-white px-[3px] text-[14px] text-[#333]"
                >
                    <option>Name</option>
                </select>
                <span className="pointer-events-none absolute top-1/2 right-[5px] -translate-y-1/2">
                    <Caret />
                </span>
            </div>
            <input
                aria-label="Search Outline"
                placeholder="Search Outline"
                className="h-7 w-[112px] border border-[#d0d0d6] bg-white px-1 text-[14px] placeholder:text-[#a5a5a5]"
            />
            <button aria-label="More filters" className="ml-2 flex flex-col items-center gap-[6px]">
                <svg width="9" height="9" viewBox="0 0 9 9" fill="none" stroke="#555">
                    <path d="M.5 0l4 4 4-4M.5 4l4 4 4-4" />
                </svg>
                <Caret className="text-[#222]" />
            </button>
        </div>
        <div className="min-h-0 flex-1 overflow-hidden text-[13px] text-black">
            <div className="flex h-5 items-center gap-[6px] pl-[11px] text-[14px] font-bold">
                <Icon>
                    <path d="M1 1h4v16H1z" fill="#e8e8e8" stroke="#555" strokeDasharray="1.500 1" />
                    <path d="M5 .7h12v16.600H5z" fill="#c9960c" stroke="#6d5410" />
                </Icon>
                <span>Project</span>
            </div>
            <ul className="pl-[15px]">
                {treeNodes.map((node) => (
                    <TreeRow key={node.label} node={node} />
                ))}
            </ul>
        </div>
        <div className="flex h-[18px] shrink-0 items-center justify-between bg-[#f0f0f0] px-[6px] text-[#555]">
            <svg width="8" height="10" viewBox="0 0 8 10" fill="none" stroke="currentColor" strokeWidth="2">
                <path d="M7 1L2 5l5 4" />
            </svg>
            <div className="mr-[14px] ml-[7px] h-full flex-1 bg-[#cdcdcd]" />
            <svg width="8" height="10" viewBox="0 0 8 10" fill="none" stroke="currentColor" strokeWidth="2">
                <path d="M1 1l5 4-5 4" />
            </svg>
        </div>
    </section>
);

/* ---------- details ---------- */

const detailGroups = [
    {
        name: 'Lighting',
        rows: [
            ['Ambient', '0.1'],
            ['Diffuse', '0.6'],
            ['Specular', '1'],
            ['Color', ''],
        ],
    },
    { name: 'Filter Options', rows: [['Control', 'Enabled']] },
];

const DetailsPanel = () => (
    <section className="flex h-[333px] shrink-0 flex-col bg-white">
        <PanelHeader title={'Details of "Model (B4)"'} maximize />
        <table className="h-[159px] w-full table-fixed border-collapse text-[13px] leading-4 text-black">
            <colgroup>
                <col className="w-[17px]" />
                <col className="w-[65px]" />
                <col />
            </colgroup>
            {detailGroups.map((group) => (
                <tbody key={group.name}>
                    <tr>
                        <td className="p-0">
                            <button
                                aria-label={`Collapse ${group.name}`}
                                className="ml-[2px] flex size-[11px] items-center justify-center border border-[#9a9a9a]"
                            >
                                <span className="h-px w-[5px] bg-[#333]" />
                            </button>
                        </td>
                        <th colSpan={2} className="border border-[#a8a8a8] px-[3px] py-0 text-left font-bold">
                            {group.name}
                        </th>
                    </tr>
                    {group.rows.map(([name, value]) => (
                        <tr key={name}>
                            <td className="p-0" />
                            <td className="border border-[#a8a8a8] px-[3px] py-0">{name}</td>
                            <td className={`border border-[#a8a8a8] px-[3px] py-0 ${value === 'Enabled' ? 'bg-[#e6e6e3]' : ''}`}>
                                {value}
                            </td>
                        </tr>
                    ))}
                </tbody>
            ))}
        </table>
    </section>
);

/* ---------- graphics toolbar ---------- */

const Sep = () => <div className="mx-1 h-7 w-px shrink-0 bg-[#d3d3da]" />;

const Tool = (props: { label: string; active?: boolean; children: ReactNode }) => (
    <button
        aria-label={props.label}
        className={`flex h-[27px] w-[27px] shrink-0 items-center justify-center ${props.active ? 'border-2 border-[#6aa5e3] bg-[#f4f8fd]' : ''}`}
    >
        {props.children}
    </button>
);

const MenuTool = (props: { icon: ReactNode; label: string }) => (
    <button className="flex shrink-0 items-center gap-[3px] whitespace-nowrap">
        {props.icon}
        <span>{props.label}</span>
        <Caret />
    </button>
);

const GraphicsToolbar = () => (
    <div className="flex h-[33px] shrink-0 items-center bg-[#eeeef3] pl-[11px] text-[14px] text-[#333]">
        <Grip />
        <div className="w-[8px] shrink-0" />
        <Tool label="Previous view">
            <Magnifier stroke="#9a9a9a">
                <path d="M5 8h6M7.500 5.500L5 8l2.500 2.500" stroke="#b5b5b5" strokeWidth="1.2" />
            </Magnifier>
        </Tool>
        <Tool label="Next view">
            <Magnifier stroke="#9a9a9a">
                <path d="M5 8h6M8.500 5.500L11 8l-2.500 2.500" stroke="#b5b5b5" strokeWidth="1.2" />
            </Magnifier>
        </Tool>
        <Sep />
        <Tool label="Shaded exterior and edges" active>
            <Icon>
                <IsoCube top="#9b9b9b" left="#6f6f6f" right="#858585" stroke="#222" />
            </Icon>
        </Tool>
        <Tool label="Shaded exterior">
            <Icon>
                <IsoCube top="#c9c9c9" left="#a0a0a0" right="#7d7d7d" stroke="none" />
            </Icon>
        </Tool>
        <Tool label="Display style">
            <ViewSwapIcon />
        </Tool>
        <Sep />
        <Tool label="Viewports">
            <GridViewIcon />
        </Tool>
        <Sep />
        <Tool label="Rotate">
            <RotateIcon />
        </Tool>
        <div className="w-[14px] pl-[2px]">
            <Caret />
        </div>
        <Tool label="Pan">
            <PanIcon />
        </Tool>
        <Tool label="Zoom">
            <Magnifier stroke="#5c5c5c">
                <path d="M8 3l3 3.500H5zM8 13l3-3.500H5z" fill="#d9a32a" />
            </Magnifier>
        </Tool>
        <Tool label="Box zoom">
            <Magnifier stroke="#5c5c5c">
                <path d="M8 4v8M4 8h8" stroke="#d9a32a" strokeWidth="2.4" />
            </Magnifier>
        </Tool>
        <Tool label="Zoom to fit">
            <Magnifier stroke="#5c5c5c">
                <path d="M8 4l4 2v4l-4 2-4-2V6z" fill="#6b93c9" stroke="#34557f" />
            </Magnifier>
        </Tool>
        <Tool label="Zoom to selection">
            <Magnifier stroke="#5c5c5c">
                <path d="M8 4l4 2v4l-4 2-4-2V6z" fill="#a9c8a9" stroke="#34557f" />
                <path d="M8 7.500L12 6v4l-4 2z" fill="#1f9a2f" />
            </Magnifier>
        </Tool>
        <Sep />
        <span className="ml-[6px]">Select</span>
        <div className="w-[9px] shrink-0" />
        <MenuTool icon={<ModeIcon />} label="Mode" />
        <div className="ml-[10px] flex w-[302px] shrink-0 justify-between">
            <Tool label="Smart select" active>
                <SmartPickIcon />
            </Tool>
            <Tool label="Vertex">
                <PickCube>
                    <circle cx="6" cy="5.500" r="2.200" fill="#2a9c3a" />
                </PickCube>
            </Tool>
            <Tool label="Edge">
                <PickCube>
                    <path d="M1.500 3l4.500 3" stroke="#2a9c3a" strokeWidth="3" />
                </PickCube>
            </Tool>
            <Tool label="Face">
                <PickCube top="#10d020" />
            </Tool>
            <Tool label="Body">
                <PickCube top="#10d020" body="#18e020" />
            </Tool>
            <Tool label="Node">
                <PickCube mesh top="#cfe0f3" body="#cfe0f3">
                    <circle cx="6" cy="5.500" r="1.800" fill="#2a9c3a" />
                </PickCube>
            </Tool>
            <Tool label="Element face">
                <PickCube mesh top="#1f9a2f" body="#cfe0f3" />
            </Tool>
            <Tool label="Element">
                <PickCube mesh top="#cfe0f3" body="#b4cdea">
                    <path d="M6 5.500h6v6H6z" fill="#1f8a3f" />
                </PickCube>
            </Tool>
            <Tool label="Coordinate">
                <XyzIcon />
            </Tool>
            <Tool label="Probe">
                <ProbeIcon />
            </Tool>
            <Tool label="Label">
                <LabelIcon />
            </Tool>
        </div>
        <Sep />
        <div className="flex items-center gap-[16px] pl-[4px]">
            <MenuTool icon={<ClipboardIcon />} label="Clipboard" />
            <span className="whitespace-nowrap">[ Empty ]</span>
        </div>
        <div className="w-[4px] shrink-0" />
        <Sep />
        <div className="flex items-center gap-[14px] pl-[6px]">
            <MenuTool icon={<ExtendIcon />} label="Extend" />
            <MenuTool icon={<SelectByIcon />} label="Select By" />
            <MenuTool icon={<ConvertIcon />} label="Convert" />
            <span className="mt-3 -ml-1">
                <Caret className="text-[#222]" />
            </span>
        </div>
    </div>
);

/* ---------- viewport ---------- */

const ScaleBar = () => (
    <div className="absolute bottom-[22px] left-1/2 w-[510px] -translate-x-1/2 text-[13px] leading-4 text-black">
        <div className="flex justify-between">
            <span className="-ml-[17px] w-[34px] text-center">0.000</span>
            <span>2.500</span>
            <span className="-mr-[17px] w-[34px] whitespace-nowrap">5.000 (m)</span>
        </div>
        <div className="mt-px grid h-[12px] grid-cols-4 border border-black bg-white">
            <div className="bg-black" />
            <div />
            <div className="bg-black" />
            <div />
        </div>
        <div className="mt-[3px] grid grid-cols-2 text-center">
            <span>1.250</span>
            <span>3.750</span>
        </div>
    </div>
);

const Triad = () => (
    <svg width="120" height="132" viewBox="1700 658 120 132" className="absolute right-[100px] bottom-[5px]" aria-hidden="true">
        <defs>
            <radialGradient id="triadY" cx="0.4" cy="0.35">
                <stop offset="0" stopColor="#1f9a22" />
                <stop offset="1" stopColor="#064a08" />
            </radialGradient>
            <radialGradient id="triadIso" cx="0.4" cy="0.35">
                <stop offset="0" stopColor="#3fe6e0" />
                <stop offset="1" stopColor="#0b7f84" />
            </radialGradient>
        </defs>
        <path d="M1804 690L1736 680" stroke="#0b0ba8" strokeWidth="5" />
        <path d="M1719 677l22-5-2 16z" fill="#0a0a9c" />
        <path d="M1804 690l-9 64" stroke="#b80c0c" strokeWidth="5" />
        <path d="M1786 752l17 3-11 18z" fill="#9c0808" />
        <circle cx="1805.500" cy="679" r="8.300" fill="url(#triadY)" />
        <circle cx="1759.500" cy="716" r="8.500" fill="url(#triadIso)" />
        <g fontSize="14" fontFamily="Noto Sans, sans-serif">
            <text x="1704" y="676" fill="#2a2ad0">
                Z
            </text>
            <text x="1806" y="672" fill="#2f9a3a">
                Y
            </text>
            <text x="1789" y="787" fill="#e03a3a">
                X
            </text>
        </g>
    </svg>
);

const Viewport = () => (
    <div className="relative min-h-0 flex-1 overflow-hidden bg-linear-to-b from-[#6b8bdd] to-white">
        <div className="absolute top-[18px] left-[17px] text-[14px] leading-[18px] text-black">
            <p className="font-bold">Model</p>
            <p>1/6/2024 8:41 AM</p>
        </div>
        <svg width="254" height="379" viewBox="0 0 254 379" className="absolute top-[59px] left-[39.15%]" role="img" aria-label="Model geometry">
            <defs>
                <linearGradient id="bodyShade" gradientUnits="userSpaceOnUse" x1="141" y1="16" x2="110" y2="362">
                    <stop offset="0" stopColor="#7e92a4" />
                    <stop offset="0.06" stopColor="#8ca1b4" />
                    <stop offset="0.2" stopColor="#93a8bb" />
                    <stop offset="0.4" stopColor="#8699aa" />
                    <stop offset="0.6" stopColor="#647381" />
                    <stop offset="0.8" stopColor="#3f4951" />
                    <stop offset="0.9" stopColor="#343c42" />
                    <stop offset="1" stopColor="#394248" />
                </linearGradient>
            </defs>
            <path d="M51 1l202 30-53 347L0 348z" fill="url(#bodyShade)" />
            <path d="M0 348L51 1l202 30-22 146" fill="none" stroke="#b9cfe0" />
        </svg>
        <div className="absolute top-[21px] right-[22px] text-right text-white">
            <p className="text-[40px] leading-[48px] font-bold">Ansys</p>
            <p className="text-[22px] leading-[22px] font-semibold">2021 R2</p>
        </div>
        <ScaleBar />
        <Triad />
    </div>
);

/* ---------- messages ---------- */

const messageCells = [
    'An error occurred while starting the solver module. Please refer to the Troubleshooting section',
    'Project>Model>Static Structural>Solution',
    'Saturday, January 6, 2024 8:38:36 AM',
];

const MessagesPanel = () => (
    <section className="mt-[5px] flex h-[205px] shrink-0 flex-col bg-[#a0a0a0]">
        <PanelHeader title="Messages" />
        <table className="w-[1299px] max-w-full table-fixed border-collapse text-[13px] text-black">
            <colgroup>
                <col className="w-[61px]" />
                <col className="w-[582px]" />
                <col className="w-[381px]" />
                <col className="w-[275px]" />
            </colgroup>
            <thead>
                <tr className="h-[19px] bg-[#efefef] text-left leading-[17px]">
                    <th className="border-r border-b border-[#9a9a9a] p-0" aria-label="Severity" />
                    {['Text', 'Association', 'Timestamp'].map((head) => (
                        <th key={head} className="border-r border-b border-[#9a9a9a] px-[3px] py-0 font-normal">
                            {head}
                        </th>
                    ))}
                </tr>
            </thead>
            <tbody>
                <tr className="h-[19px] bg-white leading-[17px] whitespace-nowrap">
                    <td className="border-r border-b border-[#9a9a9a] bg-[#efefef] px-[3px] py-0">Error</td>
                    {messageCells.map((text) => (
                        <td key={text} className="border-r border-b border-[#c8c8c8] px-[3px] py-0 text-[14px]">
                            <div className="overflow-hidden">{text}</div>
                        </td>
                    ))}
                </tr>
            </tbody>
        </table>
    </section>
);

const StatusBar = () => (
    <footer className="flex h-[26px] shrink-0 items-center justify-end bg-[#007acc] pr-[10px] text-[14px] whitespace-nowrap text-white">
        <button className="mr-[22px] flex items-center gap-[2px]">
            <Icon size={20}>
                <path d="M1 6h16v8H7l-3 3.500V14H1z" fill="#ffcf5a" stroke="#e8a52a" strokeWidth="0.6" />
                <path d="M9.500 0L17 13H3z" fill="#c81c10" stroke="#f0d8c8" strokeWidth="0.6" />
                <path d="M9.800 4v5M9.800 10v1.800" stroke="#fff" strokeWidth="1.6" />
            </Icon>
            1 Message
        </button>
        <span className="mr-[30px]">No Selection</span>
        <button className="mr-[19px] flex items-center gap-[6px]">
            <svg width="10" height="6" viewBox="0 0 10 6">
                <path d="M0 6h10L5 0z" fill="#fff" />
            </svg>
            Metric (m, kg, N, s, V, A)
        </button>
        <div className="flex gap-[15px]">
            <span>Degrees</span>
            <span>rad/s</span>
            <span>Celsius</span>
        </div>
    </footer>
);

const App = () => (
    <div className="flex h-screen flex-col overflow-hidden bg-[#eeeef3] font-['Noto_Sans','Open_Sans',sans-serif]">
        <TitleBar />
        <TabBar />
        <Ribbon />
        <main className="flex min-h-0 flex-1">
            <aside className="flex w-[288px] shrink-0 flex-col gap-[6px]">
                <OutlinePanel />
                <DetailsPanel />
            </aside>
            <div className="ml-[5px] flex min-w-0 flex-1 flex-col">
                <GraphicsToolbar />
                <Viewport />
                <MessagesPanel />
            </div>
        </main>
        <StatusBar />
    </div>
);

export default App;
